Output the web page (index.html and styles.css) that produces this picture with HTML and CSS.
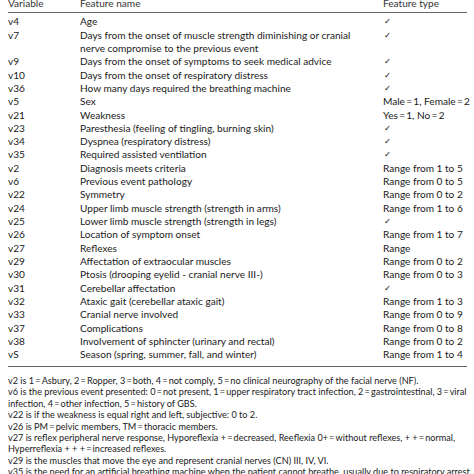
FILE: index.html
```html
<!DOCTYPE html>
<html>
<head>
<meta charset="utf-8">
<link rel="stylesheet" href="styles.css">
</head>
<body>
<div class="page">
  <div class="table">
    <div class="row head"><div>Variable</div><div>Feature name</div><div>Feature type</div></div>
    <div class="body">
      <div class="row"><div>v4</div><div>Age</div><div class="ck">✓</div></div>
      <div class="row"><div>v7</div><div>Days from the onset of muscle strength diminishing or cranial<br>nerve compromise to the previous event</div><div class="ck">✓</div></div>
      <div class="row"><div>v9</div><div>Days from the onset of symptoms to seek medical advice</div><div class="ck">✓</div></div>
      <div class="row"><div>v10</div><div>Days from the onset of respiratory distress</div><div class="ck">✓</div></div>
      <div class="row"><div>v36</div><div>How many days required the breathing machine</div><div class="ck">✓</div></div>
      <div class="row"><div>v5</div><div>Sex</div><div>Male&thinsp;=&thinsp;1, Female&thinsp;=&thinsp;2</div></div>
      <div class="row"><div>v21</div><div>Weakness</div><div>Yes&thinsp;=&thinsp;1, No&thinsp;=&thinsp;2</div></div>
      <div class="row"><div>v23</div><div>Paresthesia (feeling of tingling, burning skin)</div><div class="ck">✓</div></div>
      <div class="row"><div>v34</div><div>Dyspnea (respiratory distress)</div><div class="ck">✓</div></div>
      <div class="row"><div>v35</div><div>Required assisted ventilation</div><div class="ck">✓</div></div>
      <div class="row"><div>v2</div><div>Diagnosis meets criteria</div><div>Range from 1 to 5</div></div>
      <div class="row"><div>v6</div><div>Previous event pathology</div><div>Range from 0 to 5</div></div>
      <div class="row"><div>v22</div><div>Symmetry</div><div>Range from 0 to 2</div></div>
      <div class="row"><div>v24</div><div>Upper limb muscle strength (strength in arms)</div><div>Range from 1 to 6</div></div>
      <div class="row"><div>v25</div><div>Lower limb muscle strength (strength in legs)</div><div class="ck">✓</div></div>
      <div class="row"><div>v26</div><div>Location of symptom onset</div><div>Range from 1 to 7</div></div>
      <div class="row"><div>v27</div><div>Reflexes</div><div>Range</div></div>
      <div class="row"><div>v29</div><div>Affectation of extraocular muscles</div><div>Range from 0 to 2</div></div>
      <div class="row"><div>v30</div><div>Ptosis (drooping eyelid - cranial nerve III-)</div><div>Range from 0 to 3</div></div>
      <div class="row"><div>v31</div><div>Cerebellar affectation</div><div class="ck">✓</div></div>
      <div class="row"><div>v32</div><div>Ataxic gait (cerebellar ataxic gait)</div><div>Range from 1 to 3</div></div>
      <div class="row"><div>v33</div><div>Cranial nerve involved</div><div>Range from 0 to 9</div></div>
      <div class="row"><div>v37</div><div>Complications</div><div>Range from 0 to 8</div></div>
      <div class="row"><div>v38</div><div>Involvement of sphincter (urinary and rectal)</div><div>Range from 0 to 2</div></div>
      <div class="row"><div>vS</div><div>Season (spring, summer, fall, and winter)</div><div>Range from 1 to 4</div></div>
    </div>
  </div>
  <div class="notes">
    <p>v2 is 1&thinsp;=&thinsp;Asbury, 2&thinsp;=&thinsp;Ropper, 3&thinsp;=&thinsp;both, 4&thinsp;=&thinsp;not comply, 5&thinsp;=&thinsp;no clinical neurography of the facial nerve (NF).</p>
    <p>v6 is the previous event presented: 0&thinsp;=&thinsp;not present, 1&thinsp;=&thinsp;upper respiratory tract infection, 2&thinsp;=&thinsp;gastrointestinal, 3&thinsp;=&thinsp;viral<br>infection, 4&thinsp;=&thinsp;other infection, 5&thinsp;=&thinsp;history of GBS.</p>
    <p>v22 is if the weakness is equal right and left, subjective: 0 to 2.</p>
    <p>v26 is PM&thinsp;=&thinsp;pelvic members, TM&thinsp;=&thinsp;thoracic members.</p>
    <p>v27 is reflex peripheral nerve response, Hyporeflexia +&thinsp;=&thinsp;decreased, Reeflexia 0+&thinsp;=&thinsp;without reflexes, + +&thinsp;=&thinsp;normal,<br>Hyperreflexia + + +&thinsp;=&thinsp;increased reflexes.</p>
    <p>v29 is the muscles that move the eye and represent cranial nerves (CN) III, IV, VI.</p>
    <p>v35 is the need for an artificial breathing machine when the patient cannot breathe, usually due to respiratory arrest.</p>
  </div>
</div>
</body>
</html>
```

FILE: styles.css
```css
html, body {
  margin: 0;
  padding: 0;
  background: #fff;
  overflow: hidden;
}
.page {
  width: 474px;
  height: 474px;
  overflow: hidden;
  padding: 0 7px 0 8px;
  box-sizing: border-box;
  font-family: "Lato", "Liberation Sans", sans-serif;
  color: #1a1a1a;
}
.table {
  margin-top: -3px;
  width: 459px;
  border-bottom: 1.5px solid #666;
  padding-bottom: 5px;
}
.row {
  display: grid;
  grid-template-columns: 72px 303px 1fr;
  font-size: 10.1px;
  line-height: 13.32px;
  white-space: nowrap;
}
.head {
  color: #333;
  border-bottom: 1.5px solid #666;
  padding-bottom: 2px;
}
.body {
  padding-top: 2px;
}
.ck {
  font-family: "DejaVu Sans", sans-serif;
  font-size: 8.5px;
  padding-left: 1px;
}
.notes {
  padding-top: 7.5px;
  font-size: 9.15px;
  line-height: 11.4px;
  white-space: nowrap;
}
.notes p {
  margin: 0;
}
```
